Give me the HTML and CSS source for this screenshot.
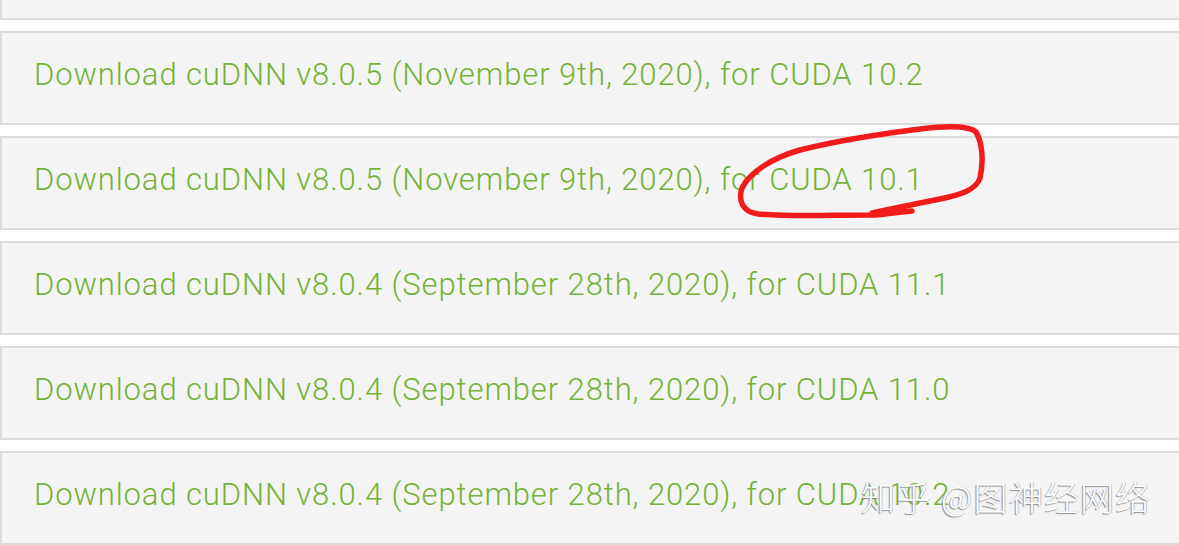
FILE: index.html
```html
<!DOCTYPE html>
<html lang="en">
<head>
<meta charset="utf-8">
<link rel="stylesheet" href="styles.css">
</head>
<body>
<div class="page">
  <div class="list">
    <div class="row row-top"></div>
    <div class="row"><a class="link">Download cuDNN v8.0.5 (November 9th, 2020), for CUDA 10.2</a></div>
    <div class="row"><a class="link">Download cuDNN v8.0.5 (November 9th, 2020), for CUDA 10.1</a></div>
    <div class="row"><a class="link">Download cuDNN v8.0.4 (September 28th, 2020), for CUDA 11.1</a></div>
    <div class="row"><a class="link">Download cuDNN v8.0.4 (September 28th, 2020), for CUDA 11.0</a></div>
    <div class="row"><a class="link">Download cuDNN v8.0.4 (September 28th, 2020), for CUDA 10.2</a></div>
  </div>
  <svg class="scribble" width="1179" height="545" viewBox="0 0 1179 545">
    <path d="M912 211 C 890 213, 875 216, 870 215 C 830 215, 790 217, 758 214 C 742 212, 738 200, 742 188 C 750 172, 772 158, 800 150 C 840 140, 880 134, 920 129 C 945 126, 968 125, 976 132 C 982 142, 984 160, 980 178 C 976 190, 960 195, 940 199 C 920 203, 895 208, 872 213" fill="none" stroke="#f21b1b" stroke-width="5.5" stroke-linecap="round" stroke-linejoin="round"/>
  </svg>
  <div class="watermark">知乎 @图神经网络</div>
</div>
</body>
</html>
```
FILE: styles.css
```css
html, body {
  margin: 0;
  padding: 0;
  background: #ffffff;
}
.page {
  position: relative;
  width: 1179px;
  height: 545px;
  overflow: hidden;
}
.list {
  display: flex;
  flex-direction: column;
  gap: 11px;
  margin-top: -74px;
}
.row {
  box-sizing: border-box;
  height: 94px;
  width: 1190px;
  background: #f4f4f4;
  border: 2px solid #dcdcdc;
  display: flex;
  align-items: center;
  padding-left: 32px;
  padding-bottom: 7px;
}
.link {
  font-family: "Roboto", "DejaVu Sans", sans-serif;
  font-size: 31px;
  font-weight: 300;
  color: #74b238;
  white-space: nowrap;
  letter-spacing: 0.9px;
}
.scribble {
  position: absolute;
  left: 0;
  top: 0;
  pointer-events: none;
}
.watermark {
  position: absolute;
  left: 861px;
  top: 472px;
  font-family: "Noto Sans CJK SC", sans-serif;
  font-size: 34px;
  font-weight: 300;
  color: #ffffff;
  text-shadow: -1px 1px 1px #8d8d8d, 1px 0 0 #c4c4c4;
  letter-spacing: 1.5px;
}
```
